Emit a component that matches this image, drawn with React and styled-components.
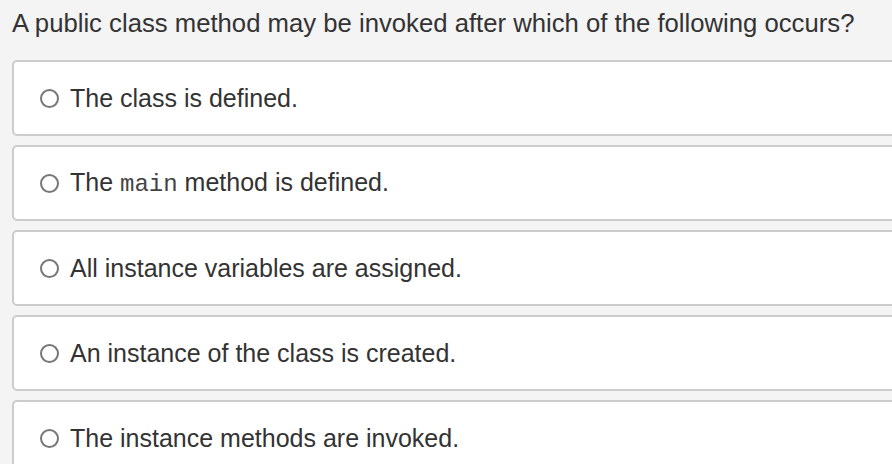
import React from 'react';
import styled, { createGlobalStyle } from 'styled-components';

const GlobalStyle = createGlobalStyle`
  html, body {
    margin: 0;
    padding: 0;
    background: #f4f4f4;
    overflow: hidden;
  }
`;

const Page = styled.div`
  padding: 9px 0 0 12px;
  font-family: "Liberation Sans", Arial, sans-serif;
  color: #333333;
`;

const Question = styled.h1`
  margin: 0 0 23px 0;
  font-size: 25.7px;
  font-weight: normal;
  line-height: 28px;
  white-space: nowrap;
`;

const OptionList = styled.div`
  display: flex;
  flex-direction: column;
  gap: 9px;
  margin-right: -20px;
`;

const Option = styled.label`
  display: flex;
  align-items: center;
  gap: 11px;
  box-sizing: border-box;
  height: 76px;
  padding-left: 26px;
  background: #ffffff;
  border: 2px solid #cccccc;
  border-radius: 5px;
  font-size: 25px;
  cursor: pointer;
`;

const Radio = styled.span`
  flex: none;
  box-sizing: border-box;
  width: 19px;
  height: 19px;
  border: 2px solid #777777;
  border-radius: 50%;
  background: #ffffff;
`;

const Code = styled.code`
  font-family: "Liberation Mono", "Courier New", monospace;
  font-size: 24px;
  font-weight: 300;
  color: #444444;
`;

const options = [
  <>The class is defined.</>,
  <>The <Code>main</Code> method is defined.</>,
  <>All instance variables are assigned.</>,
  <>An instance of the class is created.</>,
  <>The instance methods are invoked.</>
];

function App() {
  return (
    <Page>
      <GlobalStyle />
      <Question>A public class method may be invoked after which of the following occurs?</Question>
      <OptionList>
        {options.map((text, i) => (
          <Option key={i}>
            <Radio />
            <span>{text}</span>
          </Option>
        ))}
      </OptionList>
    </Page>
  );
}

export default App;
